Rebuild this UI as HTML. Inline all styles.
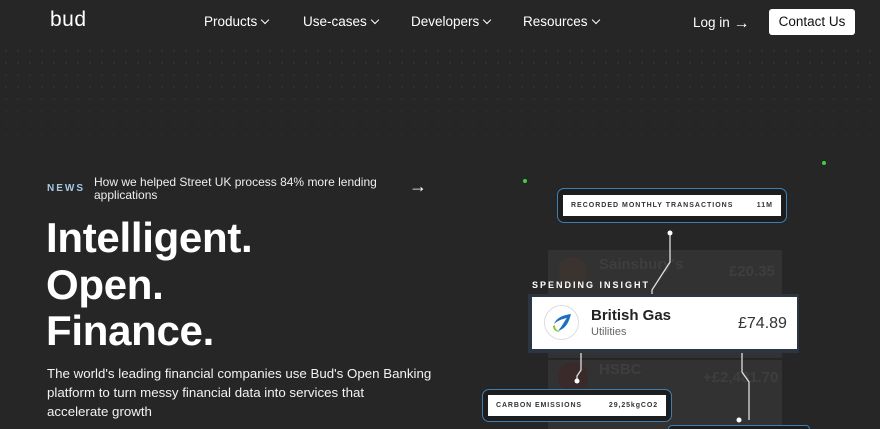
<!DOCTYPE html>
<html style="overflow:hidden;height:429px"><head><meta charset="utf-8"><style>
*{margin:0;padding:0;box-sizing:border-box}
body{width:880px;height:429px;overflow:hidden;background:#262626;font-family:"Liberation Sans",sans-serif;color:#fff;position:relative}
.dots{position:absolute;left:0;top:45px;width:880px;height:140px;background-image:radial-gradient(circle,#383838 0.7px,transparent 1.1px);background-size:12px 12px;-webkit-mask-image:linear-gradient(#000,transparent);mask-image:linear-gradient(#000,transparent)}
.a{position:absolute;white-space:nowrap}
.nav{font-size:13.5px;top:14px}
.chev{display:inline-block;width:6px;height:6px;border-right:1.6px solid #fff;border-bottom:1.6px solid #fff;transform:rotate(45deg);margin-left:5px;position:relative;top:-3px}
.h1{font-size:42px;font-weight:bold;left:46px;letter-spacing:-0.3px}
.box{position:absolute;border:1.5px solid #3d7fb3;border-radius:7px;background:#1d1d1d}
.inner{position:absolute;background:#fff;color:#333;font-size:7px;font-weight:bold;letter-spacing:1px;display:flex;justify-content:space-between;align-items:center;padding:0 8px;white-space:nowrap}
.ghost{position:absolute;background:#323232}
.gt{position:absolute;color:#3e3e3e;font-size:15px;font-weight:bold}
</style></head><body>
<div class="dots"></div>
<div class="a" style="left:50px;top:8px;font-size:21px;letter-spacing:0.5px">bud</div>
<div class="a nav" style="left:204px">Products<span class="chev"></span></div>
<div class="a nav" style="left:303px">Use-cases<span class="chev"></span></div>
<div class="a nav" style="left:411px">Developers<span class="chev"></span></div>
<div class="a nav" style="left:523px">Resources<span class="chev"></span></div>
<div class="a nav" style="left:693px">Log in <span style="font-size:16px;position:relative;top:1px">→</span></div>
<div class="a" style="left:769px;top:9px;width:86px;height:26px;background:#fff;border-radius:3px;color:#111;font-size:13.5px;text-align:center;line-height:26px">Contact Us</div>

<div class="a" style="left:523px;top:179px;width:4px;height:4px;border-radius:2px;background:#3fd13f"></div>
<div class="a" style="left:822px;top:161px;width:4px;height:4px;border-radius:2px;background:#3fd13f"></div>

<div class="a" style="left:47px;top:183px;font-size:10px;font-weight:bold;letter-spacing:2px;color:#a9c8e0">NEWS</div>
<div class="a" style="left:94px;top:176px;font-size:12px;line-height:13px;color:#eee">How we helped Street UK process 84% more lending<br>applications</div>
<div class="a" style="left:409px;top:176px;font-size:18px">→</div>
<div class="a h1" style="top:214px">Intelligent.</div>
<div class="a h1" style="top:261px">Open.</div>
<div class="a h1" style="top:307px">Finance.</div>
<div class="a" style="left:47px;top:364px;font-size:13.3px;line-height:19px;color:#f2f2f2">The world's leading financial companies use Bud's Open Banking<br>platform to turn messy financial data into services that<br>accelerate growth</div>

<div class="ghost" style="left:548px;top:250px;width:234px;height:108px"></div>
<div class="ghost" style="left:548px;top:360px;width:234px;height:60px"></div>
<div class="ghost" style="left:548px;top:408px;width:234px;height:21px"></div>
<div class="a" style="left:558px;top:257px;width:30px;height:30px;border-radius:15px;background:#3a3330"></div>
<div class="a" style="left:558px;top:362px;width:30px;height:30px;border-radius:15px;background:#3a2a2a"></div>
<div class="gt" style="left:599px;top:256px">Sainsbury's</div>
<div class="gt" style="left:729px;top:263px">£20.35</div>
<div class="gt" style="left:599px;top:361px">HSBC</div>
<div class="gt" style="left:703px;top:369px">+£2,481.70</div>
<div class="gt" style="left:599px;top:408px">Aviva</div>

<svg class="a" style="left:0;top:0" width="880" height="429">
<g stroke="#ddd" stroke-width="1.3" fill="none">
<path d="M670 233 V262 L652 290 V297"/>
<path d="M581 352 V370 L577 376 V381"/>
<path d="M742 352 V372 L749 382 V420"/>
</g>
<g fill="#fff"><circle cx="670" cy="233" r="2.5"/><circle cx="577" cy="381" r="2.5"/><circle cx="739" cy="420" r="2.5"/></g>
</svg>

<div class="box" style="left:557px;top:188px;width:230px;height:35px"></div>
<div class="inner" style="left:563px;top:195px;width:218px;height:21px"><span>RECORDED MONTHLY TRANSACTIONS</span><span>11M</span></div>

<div class="a" style="left:532px;top:280px;font-size:9px;font-weight:bold;letter-spacing:2px">SPENDING INSIGHT</div>
<div class="a" style="left:528px;top:294px;width:271px;height:59px;background:#2c3642"></div>
<div class="a" style="left:532px;top:297px;width:265px;height:52px;background:#fff"></div>
<div class="a" style="left:544px;top:305px;width:35px;height:35px;border-radius:18px;border:1px solid #ddd;background:#fff"></div>
<svg class="a" style="left:549px;top:311px" width="26" height="24" viewBox="0 0 26 24">
<path d="M5 13 C8 6 15 4 22 3 C20 10 18 17 9 20 C14 14 16 9 18 7 C13 8 8 10 5 13Z" fill="#1a6fc0"/>
<path d="M4 15 C4 19 7 21 11 21 C7 19 6 17 6 14Z" fill="#8cc63f"/>
</svg>
<div class="a" style="left:591px;top:307px;font-size:15px;font-weight:bold;color:#222">British Gas</div>
<div class="a" style="left:591px;top:326px;font-size:11px;color:#666">Utilities</div>
<div class="a" style="left:738px;top:315px;font-size:16px;color:#333">£74.89</div>

<div class="box" style="left:482px;top:389px;width:190px;height:33px"></div>
<div class="inner" style="left:488px;top:395px;width:178px;height:21px;font-size:7px;letter-spacing:0.9px"><span>CARBON EMISSIONS</span><span>29,25kgCO2</span></div>
<div class="box" style="left:668px;top:425px;width:142px;height:4px;border-bottom:none;border-radius:7px 7px 0 0"></div>
</body></html>
